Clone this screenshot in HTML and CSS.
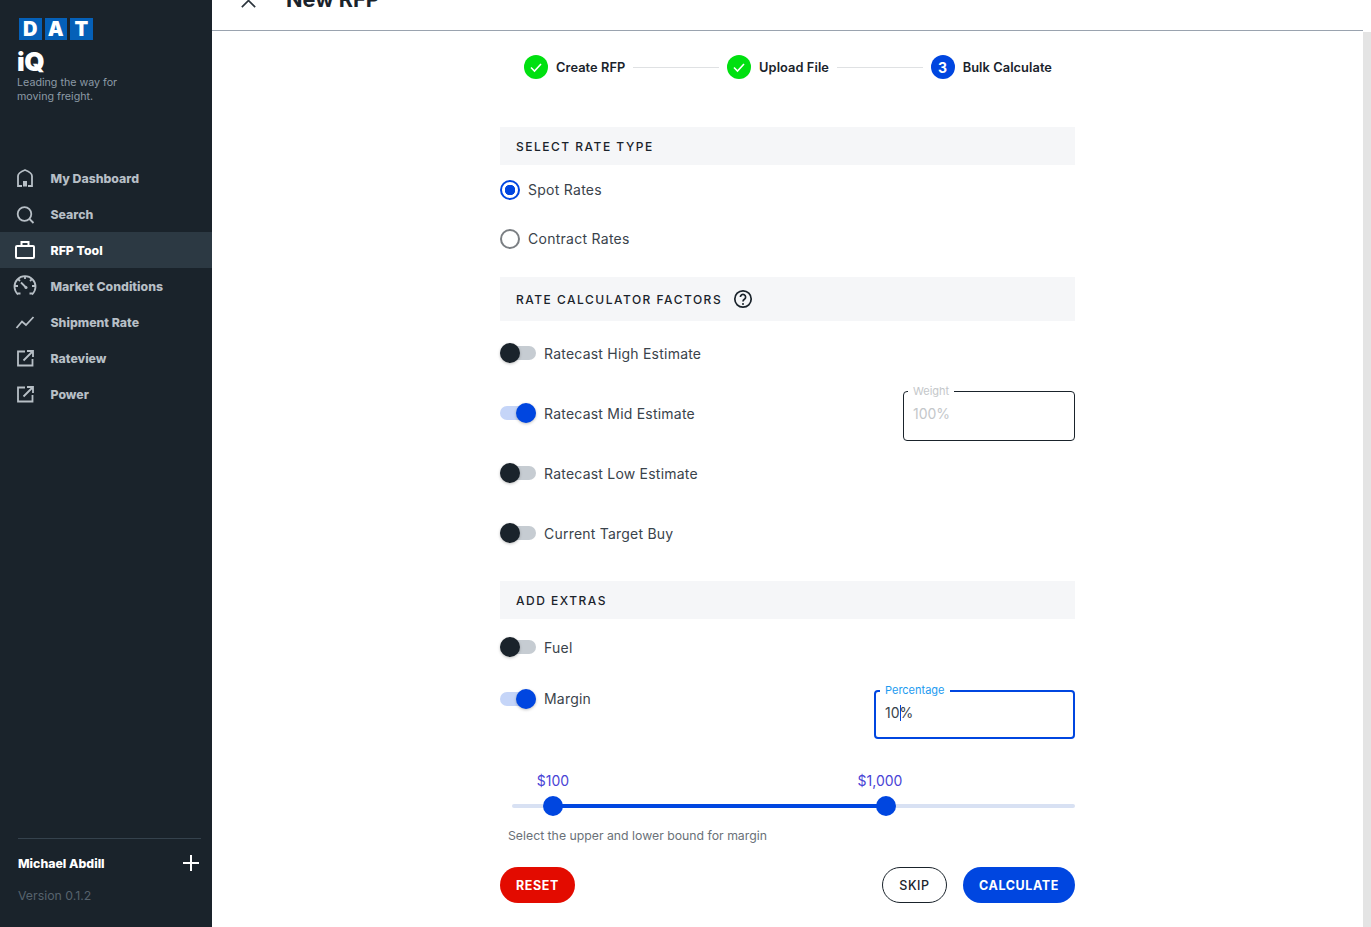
FILE: index.html
```html
<!DOCTYPE html>
<html lang="en">
<head>
  <meta charset="UTF-8" />
  <title>New RFP</title>
  <link rel="stylesheet" href="styles.css">
</head>
<body>
  <!-- Sidebar -->
  <aside class="sidebar">
    <div class="brand">
      <div class="dat-logo">
        <span>D</span><span>A</span><span>T</span>
      </div>
      <div class="iq">iQ</div>
      <p class="tagline">Leading the way for<br>moving freight.</p>
    </div>

    <nav class="nav">
      <a class="nav-item">
        <svg class="nav-icon" viewBox="0 0 24 24"><path d="M9 20H5V10C5 8 8 5.500 12 4c4 1.500 7 4 7 6v10h-4" /><rect class="solid" x="10" y="15" width="4" height="5.500" /></svg>
        My Dashboard
      </a>
      <a class="nav-item">
        <svg class="nav-icon" viewBox="0 0 24 24"><circle cx="11.500" cy="12" r="6.800" /><path d="M16.500 17l4 4" /></svg>
        Search
      </a>
      <a class="nav-item active">
        <svg class="nav-icon" viewBox="0 0 24 24"><rect x="3" y="8" width="18" height="12" rx="1" /><path d="M8.500 8V4h7v4" /></svg>
        RFP Tool
      </a>
      <a class="nav-item">
        <svg class="nav-icon" viewBox="0 0 24 24"><path d="M5 20.500a10.500 10.500 0 1 1 14 0M12 2v3M2 12h3M19 12h3M5 5l2 2M19 5l-2 2M5 19.500h2.500M16.500 19.500H19" /><path d="M8 8.500l5 5" /><circle class="solid" cx="13" cy="13.500" r="1.500" /></svg>
        Market Conditions
      </a>
      <a class="nav-item">
        <svg class="nav-icon" viewBox="0 0 24 24"><path d="M3.500 18L9 11.500l4 3.500 7.500-8" /></svg>
        Shipment Rate
      </a>
      <a class="nav-item">
        <svg class="nav-icon" viewBox="0 0 24 24"><path d="M12 5.500H5v14h14.500V13M10.500 14.500L20 5M14 5h6v6" /></svg>
        Rateview
      </a>
      <a class="nav-item">
        <svg class="nav-icon" viewBox="0 0 24 24"><path d="M12 5.500H5v14h14.500V13M10.500 14.500L20 5M14 5h6v6" /></svg>
        Power
      </a>
    </nav>

    <div class="side-footer">
      <div class="user-row">
        <span class="user-name">Michael Abdill</span>
        <svg class="plus" viewBox="0 0 16 16"><path d="M8 0v16M0 8h16" /></svg>
      </div>
      <div class="version">Version 0.1.2</div>
    </div>
  </aside>

  <div class="main">
    <!-- Header, scrolled partly out of view -->
    <header class="topbar">
      <svg class="close-icon" viewBox="0 0 18 18"><path d="M1 1l16 16M17 1L1 17" /></svg>
      <h1>New RFP</h1>
    </header>

    <div class="scroll-area">
      <div class="scrollbar"></div>
      <div class="content">

        <!-- Steps -->
        <div class="stepper">
          <div class="step">
            <span class="step-dot done"><svg viewBox="0 0 24 24"><path d="M7 12.500l3.500 3.500L17 9" /></svg></span>
            Create RFP
          </div>
          <div class="step-line"></div>
          <div class="step">
            <span class="step-dot done"><svg viewBox="0 0 24 24"><path d="M7 12.500l3.500 3.500L17 9" /></svg></span>
            Upload File
          </div>
          <div class="step-line"></div>
          <div class="step">
            <span class="step-dot current">3</span>
            Bulk Calculate
          </div>
        </div>

        <!-- Rate type -->
        <h2 class="section-bar">Select Rate Type</h2>
        <div class="radio-row first"><span class="radio checked"></span>Spot Rates</div>
        <div class="radio-row"><span class="radio"></span>Contract Rates</div>

        <!-- Factors -->
        <h2 class="section-bar tall">
          Rate Calculator Factors
          <svg class="help-icon" viewBox="0 0 20 20"><circle cx="10" cy="10" r="8.200" /><path d="M7.400 8a2.600 2.600 0 1 1 4 2.200c-.9.6-1.400 1-1.400 2.200" /><circle class="solid" cx="10" cy="15" r="1" /></svg>
        </h2>
        <div class="factors">
          <div class="toggle-row">
            <span class="toggle"></span>Ratecast High Estimate
          </div>
          <div class="toggle-row">
            <span class="toggle on"></span>Ratecast Mid Estimate
            <div class="field weight">
              <label>Weight</label>
              <span class="field-value">100%</span>
            </div>
          </div>
          <div class="toggle-row">
            <span class="toggle"></span>Ratecast Low Estimate
          </div>
          <div class="toggle-row">
            <span class="toggle"></span>Current Target Buy
          </div>
        </div>

        <!-- Extras -->
        <h2 class="section-bar extras">Add Extras</h2>
        <div class="toggle-row short fuel">
          <span class="toggle"></span>Fuel
        </div>
        <div class="toggle-row short margin">
          <span class="toggle on"></span>Margin
          <div class="field percentage">
            <label>Percentage</label>
            <span class="field-value">10<i class="caret"></i>%</span>
          </div>
        </div>

        <!-- Margin range -->
        <div class="range-labels">
          <span class="low">$100</span>
          <span class="high">$1,000</span>
        </div>
        <div class="slider">
          <div class="slider-fill"></div>
          <span class="thumb thumb-low"></span>
          <span class="thumb thumb-high"></span>
        </div>
        <p class="hint">Select the upper and lower bound for margin</p>

        <div class="actions">
          <button class="btn reset">Reset</button>
          <button class="btn skip">Skip</button>
          <button class="btn calculate">Calculate</button>
        </div>

      </div>
    </div>
  </div>
</body>
</html>
```

FILE: styles.css
```css
* {
  box-sizing: border-box;
}

html, body {
  height: 100%;
}

body {
  margin: 0;
  display: flex;
  height: 927px;
  overflow: hidden;
  font-family: 'Inter', 'Liberation Sans', sans-serif;
  background: #fff;
  color: #1a232b;
}

svg {
  fill: none;
  stroke: currentColor;
}

svg .solid {
  fill: currentColor;
  stroke: none;
}

/* Sidebar */
.sidebar {
  width: 212px;
  flex-shrink: 0;
  background: #1a232b;
  display: flex;
  flex-direction: column;
}

.brand {
  padding: 18px 0 0 17px;
  height: 160px;
}

.dat-logo {
  display: flex;
  gap: 3px;
  margin-left: 2px;
}

.dat-logo span {
  width: 22.500px;
  height: 22px;
  background: #0560b8;
  color: #fff;
  font-size: 20px;
  font-weight: 900;
  line-height: 22px;
  text-align: center;
}

.iq {
  margin-top: 9px;
  color: #fff;
  font-size: 26px;
  font-weight: 900;
  line-height: 25px;
  letter-spacing: -0.5px;
}

.tagline {
  margin: 2px 0 0;
  color: #8c9aa6;
  font-size: 10.700px;
  line-height: 14px;
}

.nav-item {
  display: flex;
  align-items: center;
  height: 36px;
  padding-left: 13px;
  color: #b7bfc6;
  font-size: 12.300px;
  font-weight: 800;
}

.nav-item.active {
  background: #2c3943;
  color: #fff;
}

.nav-icon {
  width: 24px;
  height: 24px;
  margin-right: 13.500px;
  stroke-width: 1.800;
  flex-shrink: 0;
}

.nav-item.active .nav-icon {
  stroke-width: 2;
}

.side-footer {
  margin: auto 11px 0 18px;
  height: 89px;
  border-top: 1px solid #35424d;
}

.user-row {
  display: flex;
  align-items: center;
  justify-content: space-between;
  margin-top: 15px;
  height: 18px;
  padding-right: 2px;
}

.user-name {
  color: #fff;
  font-size: 12.300px;
  font-weight: 800;
}

.plus {
  width: 16px;
  height: 16px;
  color: #fff;
  stroke-width: 2;
}

.version {
  margin-top: 16px;
  color: #56626d;
  font-size: 12.300px;
}

/* Main */
.main {
  flex: 1;
  display: flex;
  flex-direction: column;
  min-width: 0;
}

.topbar {
  height: 31px;
  flex-shrink: 0;
  margin-right: 8px;
  overflow: hidden;
  border-bottom: 1px solid #9aa3af;
  display: flex;
  align-items: flex-end;
  padding: 0 0 22px 29px;
}

.close-icon {
  width: 15px;
  height: 15px;
  flex-shrink: 0;
  stroke-width: 2;
  color: #2b343c;
}

.topbar h1 {
  margin: 0 0 -1px 30px;
  font-size: 21.700px;
  font-weight: 700;
  line-height: 20px;
  white-space: nowrap;
}

.scroll-area {
  flex: 1;
  position: relative;
  padding-right: 8px;
}

.scrollbar {
  position: absolute;
  top: 1px;
  right: 0;
  bottom: 0;
  width: 8px;
  background: #e4e4e4;
}

.content {
  width: 575px;
  margin: 0 auto;
}

/* Steps */
.stepper {
  display: flex;
  align-items: center;
  height: 96px;
  padding: 0 23px 24px 24px;
}

.step {
  display: flex;
  align-items: center;
  gap: 8px;
  font-size: 12.800px;
  font-weight: 600;
  letter-spacing: 0.080px;
  white-space: nowrap;
}

.step-dot {
  width: 24px;
  height: 24px;
  border-radius: 50%;
  display: flex;
  align-items: center;
  justify-content: center;
  color: #fff;
  font-size: 14px;
  font-weight: 700;
}

.step-dot svg {
  width: 24px;
  height: 24px;
  stroke-width: 1.600;
}

.step-dot.done {
  background: #00e010;
}

.step-dot.current {
  background: #0046e0;
}

.step-line {
  flex: 1;
  height: 1px;
  margin: 0 8px;
  background: #dfe1e3;
}

/* Section bars */
.section-bar {
  display: flex;
  align-items: center;
  margin: 0;
  height: 38px;
  padding-left: 16px;
  background: #f5f6f8;
  font-size: 12px;
  font-weight: 500;
  letter-spacing: 1.500px;
  text-transform: uppercase;
}

.section-bar.tall {
  height: 44px;
  margin-top: 14px;
}

.section-bar.extras {
  margin-top: 18px;
}

.help-icon {
  width: 20px;
  height: 20px;
  margin-left: 11px;
  stroke-width: 1.700;
}

/* Radios */
.radio-row {
  display: flex;
  align-items: center;
  gap: 8px;
  height: 49px;
  font-size: 14px;
  letter-spacing: 0.270px;
  color: #3a434b;
}

.radio {
  width: 20px;
  height: 20px;
  border-radius: 50%;
  border: 2px solid #7b7f83;
  background: #fff;
}

.radio.checked {
  border-color: #0046e0;
  background: radial-gradient(circle, #0046e0 0 5px, #fff 5.500px);
}

/* Toggles */
.factors {
  margin-top: 2px;
}

.toggle-row {
  position: relative;
  display: flex;
  align-items: center;
  gap: 8px;
  height: 60px;
  font-size: 14px;
  letter-spacing: 0.220px;
  color: #3a434b;
}

.toggle-row.short {
  height: 38px;
}

.toggle-row.fuel {
  margin-top: 9px;
}

.toggle-row.margin {
  align-items: flex-start;
  height: 61px;
  margin-top: 23px;
  line-height: 20px;
}

.toggle {
  position: relative;
  width: 36px;
  height: 14px;
  border-radius: 7px;
  background: #c6ccd2;
  flex-shrink: 0;
}

.margin .toggle {
  margin-top: 3px;
}

.toggle::after {
  content: "";
  position: absolute;
  top: -3px;
  left: 0;
  width: 20px;
  height: 20px;
  border-radius: 50%;
  background: #1a232b;
  box-shadow: 0 1px 3px rgba(0, 0, 0, 0.25);
}

.toggle.on {
  background: #c5d5f8;
}

.toggle.on::after {
  left: 16px;
  background: #0046e0;
}

/* Outlined fields */
.field {
  position: relative;
  margin-left: auto;
  border-radius: 4px;
  display: flex;
}

.field label {
  position: absolute;
  top: -7px;
  left: 4px;
  padding: 0 5px;
  background: #fff;
  font-size: 11px;
  line-height: 13px;
  letter-spacing: 0;
}

.field-value {
  font-size: 14px;
  line-height: 17px;
  letter-spacing: 0;
}

.field.weight {
  width: 172px;
  height: 50px;
  margin-top: 6px;
  padding: 13px 9px 0;
  border: 1px solid #1a232b;
}

.field.weight label,
.field.weight .field-value {
  color: #c4c7ca;
}

.field.percentage {
  width: 201px;
  height: 49px;
  margin-top: 1px;
  padding: 12px 9px 0;
  border: 2px solid #0046e0;
}

.field.percentage label {
  top: -8px;
  left: 4px;
  color: #1d9bf0;
}

.caret {
  display: inline-block;
  width: 1px;
  height: 16px;
  margin: 0 -1px -3px 0;
  background: #0046e0;
}

/* Range slider */
.range-labels {
  position: relative;
  height: 24px;
  margin-top: 18px;
  font-size: 14px;
  color: #4a44d6;
}

.range-labels span {
  position: absolute;
  top: 4px;
  transform: translateX(-50%);
}

.range-labels .low {
  left: 53px;
}

.range-labels .high {
  left: 380px;
}

.slider {
  position: relative;
  height: 4px;
  margin: 12px 0 0 12px;
  border-radius: 2px;
  background: #d8e1f3;
}

.slider-fill {
  position: absolute;
  top: 0;
  bottom: 0;
  left: 41px;
  width: 333px;
  background: #0046e0;
}

.thumb {
  position: absolute;
  top: -8px;
  width: 20px;
  height: 20px;
  margin-left: -10px;
  border-radius: 50%;
  background: #0046e0;
}

.thumb-low {
  left: 41px;
}

.thumb-high {
  left: 374px;
}

.hint {
  margin: 20px 0 0 8px;
  font-size: 12.280px;
  line-height: 16px;
  color: #6a7178;
}

/* Buttons */
.actions {
  display: flex;
  gap: 16px;
  margin-top: 23px;
}

.btn {
  height: 36px;
  padding: 0;
  border: none;
  border-radius: 18px;
  font-family: inherit;
  font-size: 12.500px;
  font-weight: 700;
  letter-spacing: 0.600px;
  text-transform: uppercase;
  color: #fff;
}

.btn.reset {
  width: 75px;
  background: #e30b00;
  margin-right: auto;
}

.btn.skip {
  width: 65px;
  background: #fff;
  border: 1px solid #1a232b;
  color: #1a232b;
  font-weight: 500;
}

.btn.calculate {
  width: 112px;
  background: #0046e0;
}
```
